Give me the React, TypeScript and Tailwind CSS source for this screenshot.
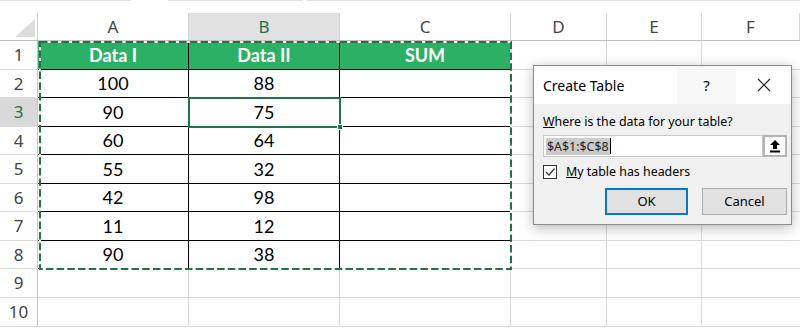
import React from "react";

const data: [string, string][] = [
  ["100", "88"],
  ["90", "75"],
  ["60", "64"],
  ["55", "32"],
  ["42", "98"],
  ["11", "12"],
  ["90", "38"],
];

const colLetters = [
  { l: "A", w: "w-[151px]" },
  { l: "B", w: "w-[151px]" },
  { l: "C", w: "w-[171px]" },
  { l: "D", w: "w-[96px]" },
  { l: "E", w: "w-[95px]" },
  { l: "F", w: "w-[98px]" },
];

function Row({ n }: { n: number }) {
  const h = n % 2 === 1 || n === 10 ? "h-[29px]" : "h-[28px]";
  const selRow = n === 3;
  const inTable = n <= 8;
  const isHead = n === 1;
  const vals = n >= 2 && n <= 8 ? data[n - 2] : null;
  const cellBase = "flex items-center justify-center border-r border-b";
  const tb = inTable ? "border-black" : "border-[#d9d9d9]";
  const headCls = isHead ? "bg-[#2bb065] text-white font-bold" : "text-black";
  return (
    <div className={`flex ${h}`}>
      <div
        className={`w-[38px] flex items-center justify-center border-r border-b border-r-[#c6c6c6] border-b-[#dadada] font-['Noto_Sans',sans-serif] text-[17px] ${
          selRow ? "bg-[#d9d9d9] text-[#217346]" : "bg-white text-[#444]"
        }`}
      >
        {n}
      </div>
      <div className={`w-[151px] ${cellBase} ${tb} ${headCls} font-['Lato',sans-serif] text-[18px]`}>
        {isHead ? "Data I" : vals ? vals[0] : ""}
      </div>
      <div className={`w-[151px] ${cellBase} ${tb} ${headCls} font-['Lato',sans-serif] text-[18px]`}>
        {isHead ? "Data II" : vals ? vals[1] : ""}
      </div>
      <div
        className={`w-[171px] ${cellBase} border-r-[#d9d9d9] ${
          inTable ? "border-b-black" : "border-b-[#d9d9d9]"
        } ${headCls} font-['Lato',sans-serif] text-[18px]`}
      >
        {isHead ? "SUM" : ""}
      </div>
      <div className="w-[96px] border-r border-b border-[#d9d9d9]" />
      <div className="w-[95px] border-r border-b border-[#d9d9d9]" />
      <div className="w-[98px] border-b border-[#d9d9d9]" />
    </div>
  );
}

export default function App() {
  return (
    <div className="relative w-[800px] h-[329px] overflow-hidden bg-white">
      {/* top strip */}
      <div className="flex h-[13px]">
        <div className="w-[131px] border-t border-[#e2e2e2]" />
        <div className="w-[37px]" />
        <div className="w-[135px] border-t border-[#e2e2e2]" />
        <div className="w-[4px]" />
        <div className="flex-1 border-t border-[#e2e2e2]" />
      </div>
      {/* column headers */}
      <div className="flex h-[28px] border-b border-[#bdbdbd] font-['Noto_Sans',sans-serif] text-[17px] text-[#444]">
        <div className="relative w-[38px] border-r border-[#d0d0d0]">
          <svg className="absolute left-[15px] top-[6px]" width="20" height="18" viewBox="0 0 20 18">
            <polygon points="20,0 20,18 0,18" fill="#dcdcdc" />
          </svg>
        </div>
        {colLetters.map((c) => (
          <div
            key={c.l}
            className={`${c.w} flex items-center justify-center border-r border-[#d6d6d6] ${
              c.l === "B" ? "bg-[#e1e1e1] text-[#217346]" : ""
            }`}
          >
            {c.l}
          </div>
        ))}
      </div>
      {[1, 2, 3, 4, 5, 6, 7, 8, 9, 10].map((n) => (
        <Row key={n} n={n} />
      ))}

      {/* marching ants */}
      <svg className="absolute left-0 top-0 pointer-events-none" width="800" height="329">
        <rect x="40" y="42" width="471" height="227" fill="none" stroke="#ffffff" strokeWidth="2" />
        <rect
          x="40"
          y="42"
          width="471"
          height="227"
          fill="none"
          stroke="#217346"
          strokeWidth="2"
          strokeDasharray="7.5 3.2"
        />
      </svg>

      {/* selected cell */}
      <div className="absolute left-[188px] top-[97px] w-[153px] h-[31px] border-2 border-[#217346]" />
      <div className="absolute left-[337px] top-[124px] w-[6px] h-[6px] bg-[#217346] border border-white" />

      {/* dialog */}
      <div className="absolute left-[533px] top-[65px] w-[259px] h-[160px] border border-[#8c8c8c] bg-[#f0f0f0] shadow-[0_3px_12px_rgba(0,0,0,0.28)] font-['Noto_Sans',sans-serif] text-black">
        <div className="flex h-[38px] bg-white">
          <div className="flex-1 flex items-center pl-[9px] text-[14px]">Create Table</div>
          <div className="w-[59px] flex items-center justify-center bg-[#f8f8f8] text-[15px]">?</div>
          <div className="w-[55px] flex items-center justify-center">
            <svg width="14" height="14" viewBox="0 0 14 14">
              <path d="M1 1 L13 13 M13 1 L1 13" stroke="#222" strokeWidth="1.2" />
            </svg>
          </div>
        </div>
        <div className="pl-[9px] pr-[4px] pt-[9px] text-[12.4px]">
          <div className="h-[18px] leading-[18px]">
            <span className="underline">W</span>here is the data for your table?
          </div>
          <div className="mt-[4px] flex h-[22px]">
            <div className="flex-1 bg-white border border-[#c8c8c8] flex items-center pl-[2px]">
              <span className="bg-[#cccccc] text-[#222] leading-[17px] px-[1px]">$A$1:$C$8</span>
              <span className="w-[1px] h-[16px] bg-black" />
            </div>
            <div className="w-[24px] h-[22px] bg-white border-2 border-[#b4b4b4] flex items-center justify-center">
              <svg width="12" height="14" viewBox="0 0 12 14">
                <polygon points="6,1 11,6 8,6 8,10 4,10 4,6 1,6" fill="#000" />
                <rect x="1" y="11.5" width="10" height="2" fill="#000" />
              </svg>
            </div>
          </div>
          <div className="mt-[8px] flex items-center h-[14px]">
            <div className="w-[14px] h-[14px] border border-[#333] bg-white flex items-center justify-center">
              <svg width="12" height="12" viewBox="0 0 12 12">
                <path d="M2 6 L5 9 L10.5 2.5" fill="none" stroke="#333" strokeWidth="1.2" />
              </svg>
            </div>
            <div className="ml-[9px]">
              <span className="underline">M</span>y table has headers
            </div>
          </div>
          <div className="mt-[9px] flex justify-end gap-[14px] text-[13px]">
            <div className="w-[83px] h-[27px] bg-[#e1e1e1] border-2 border-[#0078d7] flex items-center justify-center">
              OK
            </div>
            <div className="w-[85px] h-[27px] bg-[#e1e1e1] border border-[#adadad] flex items-center justify-center">
              Cancel
            </div>
          </div>
        </div>
      </div>
    </div>
  );
}
